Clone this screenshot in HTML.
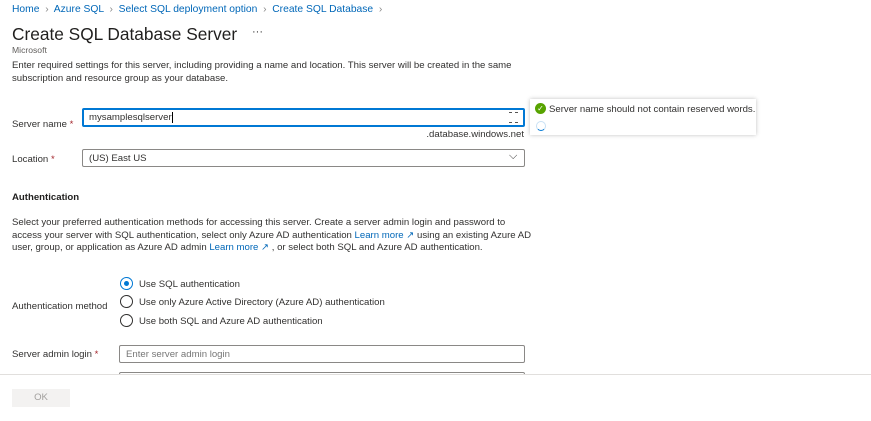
<!DOCTYPE html><html><head><style>
body{margin:0;width:871px;height:420px;overflow:hidden;background:#fff;font-family:"Liberation Sans",sans-serif;color:#323130;position:relative;font-size:9.6px}
.a{position:absolute;white-space:nowrap}
.l{color:#0067b8}
.inp{position:absolute;border:1px solid #8a8886;border-radius:2px;box-sizing:border-box;background:#fff}
.r{position:absolute;width:11px;height:11px;border:1px solid #323130;border-radius:50%}
.s{color:#a4262c}
</style></head><body>
<div class="a l" style="left:12px;top:4px;font-size:10.3px">Home <span style="color:#888">&nbsp;›&nbsp;</span> Azure SQL <span style="color:#888">&nbsp;›&nbsp;</span> Select SQL deployment option <span style="color:#888">&nbsp;›&nbsp;</span> Create SQL Database <span style="color:#888">&nbsp;›</span></div>
<div class="a" style="left:12px;top:24px;font-size:17.3px;color:#201f1e">Create SQL Database Server</div>
<div class="a" style="left:252px;top:26px;font-size:11px">···</div>
<div class="a" style="left:12px;top:45px;font-size:8.6px;color:#605e5c">Microsoft</div>
<div class="a" style="left:12px;top:60px;line-height:12.5px">Enter required settings for this server, including providing a name and location. This server will be created in the same<br>subscription and resource group as your database.</div>
<div class="a" style="left:12px;top:119px">Server name <span class="s">*</span></div>
<div class="inp" style="left:82px;top:108px;width:443px;height:19px;border:2px solid #0078d4"></div>
<div class="a" style="left:89px;top:112px">mysamplesqlserver<span style="border-left:1px solid #000">&nbsp;</span></div>
<div class="a" style="left:509px;top:112px;width:9px;height:9px;border:1px dashed #555;border-width:1px 0"></div>
<div class="a" style="left:300px;width:224px;text-align:right;top:129px">.database.windows.net</div>
<div class="a" style="left:530px;top:99px;width:226px;height:36px;background:#fff;box-shadow:0 0 4px rgba(0,0,0,.25)"></div>
<div class="a" style="left:535px;top:103px;width:11px;height:11px;border-radius:50%;background:#57a300;color:#fff;font-size:8px;text-align:center;line-height:11px">✓</div>
<div class="a" style="left:549px;top:104px">Server name should not contain reserved words.</div>
<div class="a" style="left:536px;top:121px;width:8px;height:8px;border-radius:50%;border:1px solid #c8e0f4;border-bottom-color:#0078d4"></div>
<div class="a" style="left:12px;top:154px">Location <span class="s">*</span></div>
<div class="inp" style="left:82px;top:149px;width:443px;height:18px"></div>
<div class="a" style="left:89px;top:153px">(US) East US</div>
<div class="a" style="left:509px;top:150px;font-size:11px">⌵</div>
<div class="a" style="left:12px;top:192px;font-weight:bold;color:#201f1e">Authentication</div>
<div class="a" style="left:12px;top:217px;line-height:12.6px">Select your preferred authentication methods for accessing this server. Create a server admin login and password to<br>access your server with SQL authentication, select only Azure AD authentication <span class="l">Learn more ↗</span> using an existing Azure AD<br>user, group, or application as Azure AD admin <span class="l">Learn more ↗</span> , or select both SQL and Azure AD authentication.</div>
<div class="r" style="left:120px;top:277px;border-color:#0078d4"></div><div class="a" style="left:124px;top:281px;width:5px;height:5px;border-radius:50%;background:#0078d4"></div>
<div class="a" style="left:139px;top:279px">Use SQL authentication</div>
<div class="r" style="left:120px;top:295px"></div><div class="a" style="left:139px;top:297px">Use only Azure Active Directory (Azure AD) authentication</div>
<div class="r" style="left:120px;top:314px"></div><div class="a" style="left:139px;top:316px">Use both SQL and Azure AD authentication</div>
<div class="a" style="left:12px;top:301px">Authentication method</div>
<div class="a" style="left:12px;top:349px">Server admin login <span class="s">*</span></div>
<div class="inp" style="left:119px;top:345px;width:406px;height:18px"></div>
<div class="a" style="left:126px;top:349px;color:#767676">Enter server admin login</div>
<div class="inp" style="left:119px;top:372px;width:406px;height:10px"></div>
<div class="a" style="left:0;top:374px;width:871px;height:46px;background:#fff;border-top:1px solid #e1dfdd"></div>
<div class="a" style="left:12px;top:389px;width:58px;height:18px;background:#f3f2f1;color:#a19f9d;text-align:center;line-height:18px">OK</div>
</body></html>
